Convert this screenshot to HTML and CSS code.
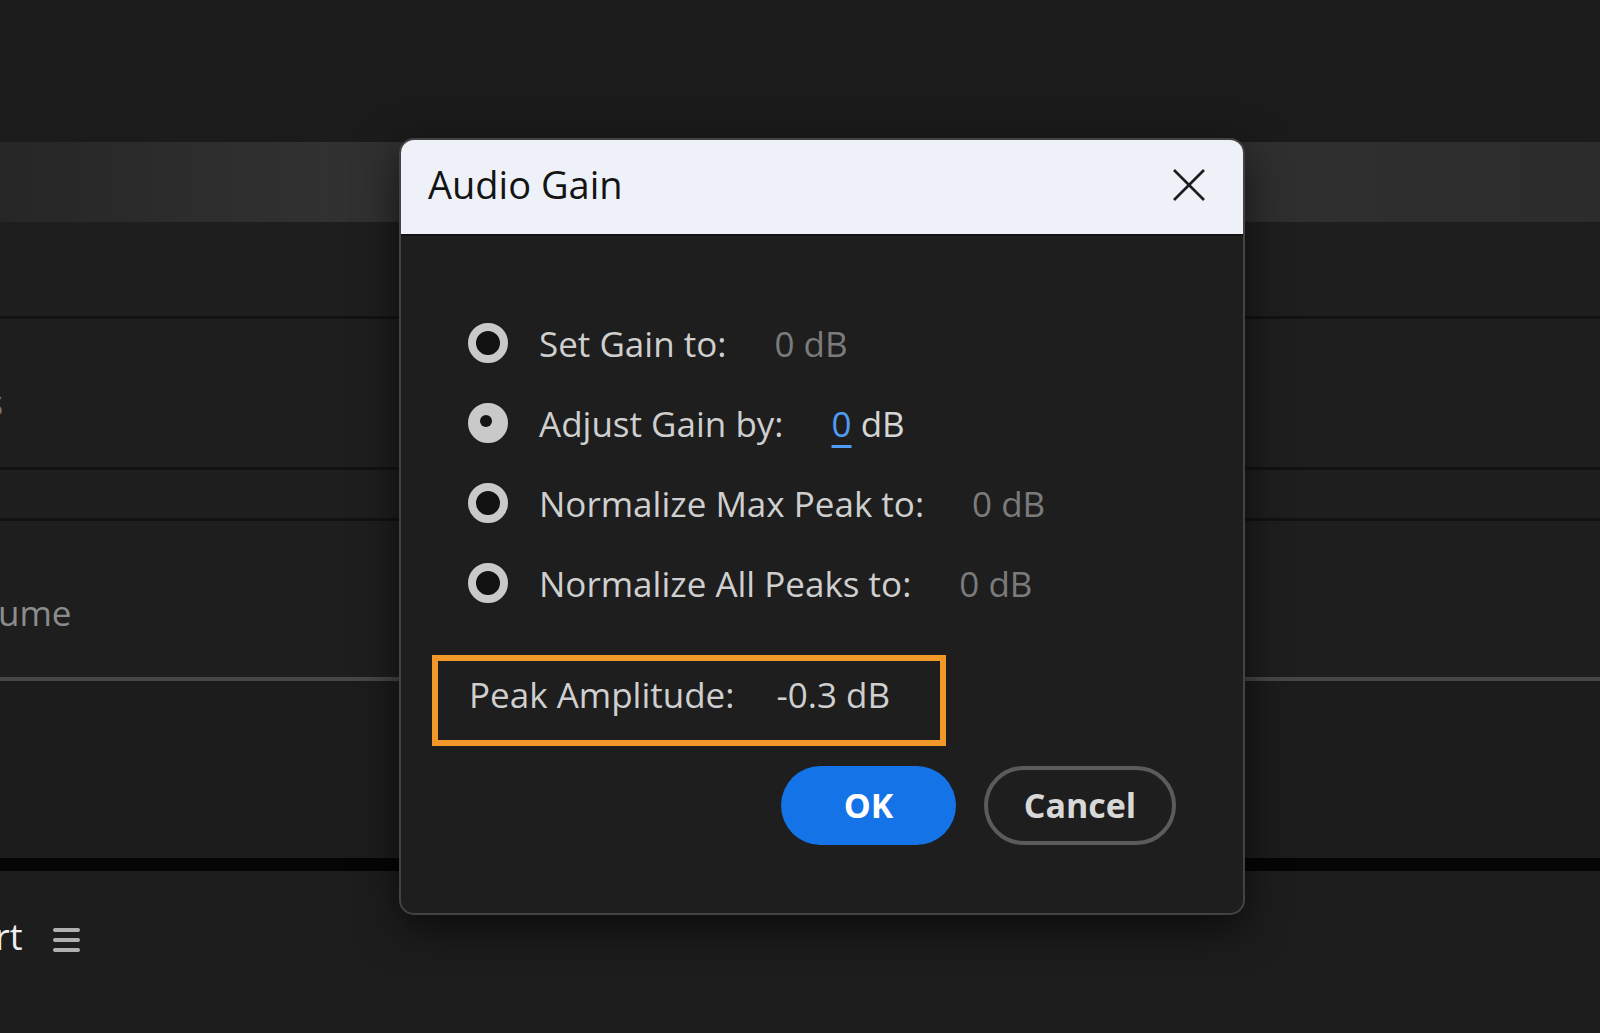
FILE: index.html
```html
<!DOCTYPE html>
<html lang="en">
<head>
    <meta charset="UTF-8">
    <meta name="viewport" content="width=device-width, initial-scale=1.0">
    <title>Audio Gain</title>
    <link rel="stylesheet" href="styles.css">
</head>
<body>

    <div class="workspace">
        <div class="top-area"></div>
        <div class="tab-band"></div>
        <div class="track track-a"></div>
        <div class="track track-b"><span class="cut-label">s</span></div>
        <div class="track track-c"></div>
        <div class="track track-d"><span class="cut-label volume">ume</span></div>
        <div class="track track-e"></div>
        <div class="divider"></div>
        <div class="footer">
            <span class="cut-label footer-label">rt</span>
            <span class="menu-icon"><i></i><i></i><i></i></span>
        </div>
    </div>

    <div class="dialog">
        <div class="dialog-header">
            <span class="dialog-title">Audio Gain</span>
            <svg class="close-icon" width="34" height="34" viewBox="0 0 34 34">
                <line x1="2" y1="2" x2="32" y2="32" />
                <line x1="32" y1="2" x2="2" y2="32" />
            </svg>
        </div>

        <div class="dialog-body">
            <div class="option">
                <span class="radio"></span>
                <span class="option-label">Set Gain to:</span>
                <span class="option-value">0 dB</span>
            </div>
            <div class="option">
                <span class="radio checked"></span>
                <span class="option-label">Adjust Gain by:</span>
                <span class="option-value active"><span class="edit-value">0</span> dB</span>
            </div>
            <div class="option">
                <span class="radio"></span>
                <span class="option-label">Normalize Max Peak to:</span>
                <span class="option-value">0 dB</span>
            </div>
            <div class="option">
                <span class="radio"></span>
                <span class="option-label">Normalize All Peaks to:</span>
                <span class="option-value">0 dB</span>
            </div>

            <div class="peak-box">
                <span class="peak-label">Peak Amplitude:</span>
                <span class="peak-value">-0.3 dB</span>
            </div>

            <div class="dialog-buttons">
                <button class="btn btn-primary">OK</button>
                <button class="btn btn-secondary">Cancel</button>
            </div>
        </div>
    </div>

</body>
</html>
```

FILE: styles.css
```css
body {
    margin: 0;
    height: 1033px;
    overflow: hidden;
    background-color: #1b1b1b;
    font-family: "Open Sans", "Noto Sans", sans-serif;
}

.workspace {
    display: flex;
    flex-direction: column;
    height: 1033px;
}
.top-area {
    height: 142px;
    background-color: #1b1b1b;
}
.tab-band {
    height: 80px;
    background: linear-gradient(90deg, #262626, #313131 20%, #2b2b2b 50%, #2f2f2f 80%, #2c2c2c);
}
.track {
    background-color: #1e1e1e;
    border-bottom: 3px solid #121212;
    overflow: hidden;
}
.track-a { height: 94px; }
.track-b { height: 148px; }
.track-c { height: 48px; }
.track-d {
    height: 156px;
    border-bottom: 4px solid #474747;
}
.track-e {
    height: 177px;
    background-color: #1c1c1c;
    border-bottom: none;
}
.divider {
    height: 13px;
    background-color: #050505;
}
.footer {
    flex: 1;
    background-color: #1d1d1d;
    display: flex;
    align-items: flex-start;
    gap: 30px;
    padding-top: 48px;
}

.cut-label {
    display: block;
    font-size: 36px;
    line-height: 1;
    color: #7a7a7a;
}
.track-b .cut-label {
    margin-top: 66px;
    margin-left: -14px;
}
.volume {
    margin-top: 74px;
    margin-left: -2px;
    color: #8c8c8c;
    font-size: 35px;
}
.footer-label {
    margin-left: -5px;
    color: #f0f0f0;
}
.menu-icon {
    display: flex;
    flex-direction: column;
    gap: 6px;
    width: 27px;
    padding-top: 9px;
}
.menu-icon i {
    display: block;
    height: 4px;
    border-radius: 2px;
    background-color: #b0b0b0;
}

/* dialog sits over the workspace */
.dialog {
    position: absolute;
    left: 399px;
    top: 138px;
    width: 846px;
    height: 777px;
    box-sizing: border-box;
    border: 2px solid #434343;
    border-radius: 15px;
    background-color: #1e1e1e;
    overflow: hidden;
    box-shadow: 0 14px 44px rgba(0, 0, 0, 0.6);
}
.dialog-header {
    height: 94px;
    border-bottom: 2px solid #111;
    background-color: #eef2f8;
    display: flex;
    align-items: center;
    justify-content: space-between;
    padding: 0 37px 0 27px;
}
.dialog-title {
    font-family: "Open Sans", sans-serif;
    font-size: 38px;
    color: #141414;
    margin-top: -6px;
}
.close-icon {
    margin-top: -4px;
}
.close-icon line {
    stroke: #1c1c1c;
    stroke-width: 2.6;
}

.dialog-body {
    padding: 67px 0 0 67px;
}
.option {
    display: flex;
    align-items: center;
    height: 80px;
    font-size: 35px;
    color: #cfcfcf;
}
.radio {
    width: 40px;
    height: 40px;
    box-sizing: border-box;
    border: 8px solid #c9c9c9;
    border-radius: 50%;
    background-color: #121212;
    margin-right: 31px;
    position: relative;
}
.radio.checked {
    background-color: #c9c9c9;
}
.radio.checked::after {
    content: "";
    position: absolute;
    left: 4px;
    top: 4px;
    width: 12px;
    height: 12px;
    border-radius: 50%;
    background-color: #141414;
}
.option-value {
    margin-left: 48px;
    color: #7b7b7b;
}
.option-value.active {
    color: #d6d6d6;
}
.edit-value {
    color: #4e9cf4;
    text-decoration: underline;
    text-decoration-thickness: 3px;
    text-underline-offset: 8px;
}

.peak-box {
    margin: 32px 0 0 -36px;
    width: 514px;
    height: 91px;
    box-sizing: border-box;
    border: 6px solid #f2982b;
    display: flex;
    align-items: center;
    gap: 42px;
    padding: 0 0 12px 31px;
    font-size: 35px;
    color: #cfcfcf;
}

.dialog-buttons {
    display: flex;
    justify-content: flex-end;
    gap: 28px;
    margin-top: 20px;
    padding-right: 67px;
}
.btn {
    height: 79px;
    border-radius: 40px;
    font-family: "Open Sans", sans-serif;
    font-size: 34px;
    font-weight: 700;
    cursor: pointer;
    padding: 0 0 2px;
}
.btn-primary {
    width: 175px;
    border: none;
    background-color: #1473e6;
    color: white;
}
.btn-secondary {
    width: 192px;
    border: 4px solid #5b5b5b;
    background-color: transparent;
    color: #d8d8d8;
}
```
